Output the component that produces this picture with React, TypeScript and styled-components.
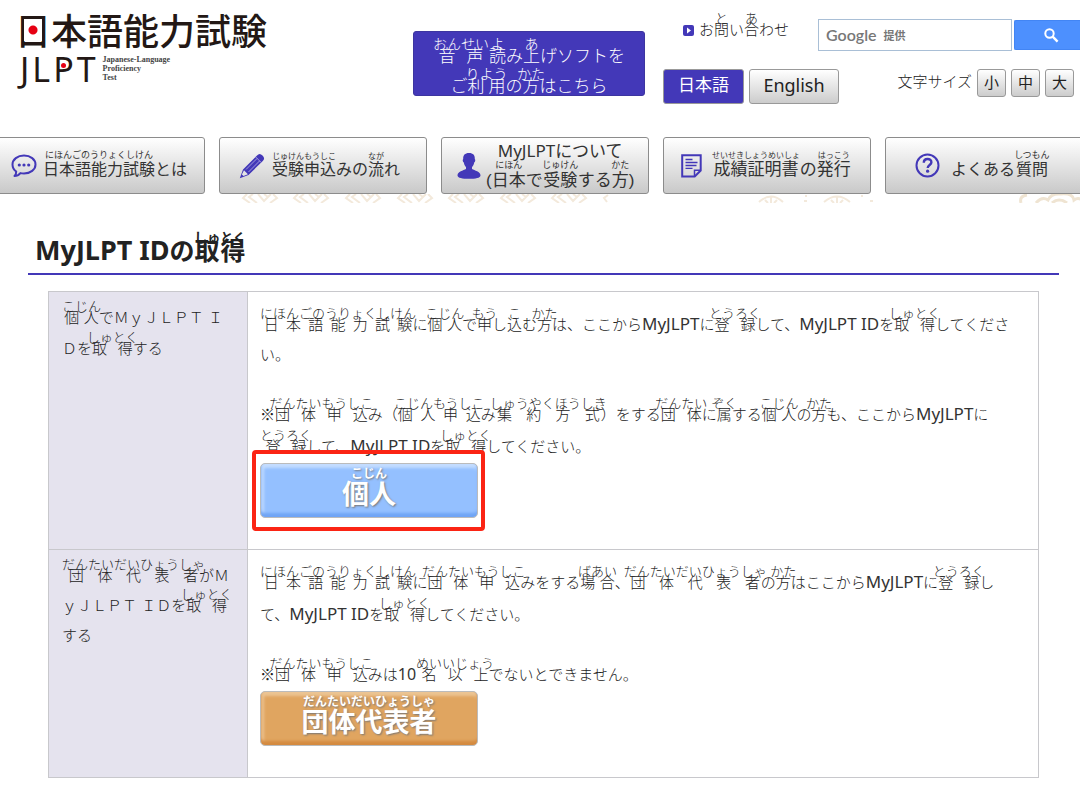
import React from 'react';
import styled, { createGlobalStyle } from 'styled-components';

const BRAND = '#4338b8';
const SANS = '"Noto Sans", "Noto Sans CJK JP", sans-serif';
const SANS_JP = '"Noto Sans CJK JP", "Noto Sans", sans-serif';
/* Short ascent and descent, so ruby lines keep an even pitch. */
const BODY = '"Liberation Sans", "Noto Sans CJK JP", sans-serif';

const GlobalStyle = createGlobalStyle`
  * { box-sizing: border-box; }
  body {
    margin: 0;
    background: #fff;
    color: #222;
    font-family: ${BODY};
    font-size: 15px;
    line-height: 30px;
    overflow-x: hidden;
  }
  button, input { font-family: inherit; }
`;

/* Readings lie partly over the top of their base text. */
const RubyText = styled.rt<{ $size: number; $shift: number }>`
  position: relative;
  top: ${(p) => p.$shift}px;
  font-size: ${(p) => p.$size}px;
  line-height: 1px;
`;

type RProps = { b: string; t: string; size?: number; shift?: number };
const R = ({ b, t, size = 13, shift = 4 }: RProps) => (
  <ruby>
    {b}
    <RubyText $size={size} $shift={shift}>{t}</RubyText>
  </ruby>
);

const Latin = styled.span<{ $size?: number }>`
  color: #333;
  font-family: ${SANS};
  font-size: ${(p) => p.$size ?? 17}px;
  font-weight: 400;
  line-height: 1;
`;

/* ---------- header ---------- */

const Header = styled.header`
  display: grid;
  grid-template-columns: 1fr 232px 417px;
  column-gap: 18px;
  height: 137px;
`;

const Logo = styled.a`
  display: block;
  padding: 9px 0 0 15px;
  color: #231815;
  text-decoration: none;
`;

const LogoTitle = styled.span`
  display: block;
  font: 500 36px/40px ${SANS_JP};
  white-space: nowrap;
`;

const Sun = styled.span`
  position: relative;
  &::after {
    content: '';
    position: absolute;
    left: 9px;
    top: 16px;
    width: 18px;
    height: 22px;
    background: radial-gradient(circle, #e60012 4px, #fff 5px);
  }
`;

const LogoSub = styled.span`
  display: flex;
  gap: 7px;
  padding: 2px 0 0 5px;
`;

const LogoLetters = styled.span`
  display: flex;
  gap: 3px;
  font: 400 34px/36px ${SANS};
`;

const Dot = styled.span`
  position: relative;
  &::after {
    content: '';
    position: absolute;
    left: 8px;
    top: 12px;
    width: 5px;
    height: 5px;
    border-radius: 50%;
    background: #e60012;
  }
`;

const LogoCaption = styled.span`
  padding-top: 4px;
  color: #444;
  font: 700 8px/9px "Liberation Serif", serif;
`;

const Banner = styled.a`
  display: block;
  height: 65px;
  margin-top: 31px;
  border: 1px solid #3d35a0;
  border-radius: 3px;
  background: ${BRAND};
  color: #fff;
  font-size: 17px;
  font-weight: 300;
  text-align: center;
  text-decoration: none;
`;

const BannerLine = styled.span`
  display: block;
  height: 37px;
  margin-bottom: -7px;
  padding-top: 7px;
`;

const Tools = styled.div`
  display: flex;
  flex-direction: column;
`;

const ToolRow = styled.div`
  display: flex;
  justify-content: space-between;
  align-items: flex-start;
`;

const TopRow = styled(ToolRow)`
  height: 68px;
  padding: 8px 0 0 20px;
`;

const ContactLink = styled.a`
  display: flex;
  align-items: center;
  gap: 5px;
  padding-top: 7px;
  color: #222;
  font-weight: 300;
  text-decoration: none;
`;

const ContactText = styled.span`
  margin-top: -8px;
  padding-top: 8px;
`;

const Search = styled.form`
  display: flex;
  gap: 2px;
  padding-top: 11px;
`;

const SearchBox = styled.div`
  position: relative;
`;

const SearchInput = styled.input`
  display: block;
  width: 194px;
  height: 32px;
  padding: 0 8px;
  border: 1px solid #a9bfd6;
  background: #fff;
`;

const SearchMark = styled.label`
  position: absolute;
  left: 8px;
  top: 0;
  display: flex;
  align-items: center;
  gap: 7px;
  height: 32px;
  color: #777;
  font: 700 11px/30px ${SANS_JP};
  pointer-events: none;
`;

const GoogleWord = styled.span`
  font: 600 16px/30px Lato, sans-serif;
`;

const SearchButton = styled.button`
  display: flex;
  align-items: center;
  justify-content: center;
  width: 66px;
  height: 30px;
  margin-top: 1px;
  padding: 0 0 0 8px;
  border: 1px solid #4285f4;
  border-right: 0;
  border-radius: 2px 0 0 2px;
  background: #4d90fe;
`;

const BottomRow = styled(ToolRow)`
  padding-right: 6px;
`;

const Group = styled.div`
  display: flex;
  gap: 5px;
`;

const GreyButton = styled.button<{ $w: number; $h: number; $size: number; $active?: boolean }>`
  width: ${(p) => p.$w}px;
  height: ${(p) => p.$h}px;
  margin-top: 1px;
  padding: 0 0 3px;
  border: 1px solid #999;
  border-radius: 3px;
  background: ${(p) => (p.$active ? BRAND : 'linear-gradient(#fff, #ccc)')};
  color: ${(p) => (p.$active ? '#fff' : '#222')};
  font-family: ${SANS};
  font-size: ${(p) => p.$size}px;
  line-height: 24px;
`;

const SizeLabel = styled.span`
  font-weight: 300;
  line-height: 28px;
`;

/* ---------- navigation ---------- */

const Nav = styled.nav`
  display: flex;
  gap: 14px;
  margin-left: -3px;
  overflow: hidden;
`;

const NavItem = styled.a`
  display: flex;
  flex: 0 0 208px;
  align-items: center;
  height: 57px;
  border: 1px solid #8c8c8c;
  border-radius: 3px;
  background: linear-gradient(#fff, #c9c9c9);
  color: #333;
  line-height: 23px;
  text-decoration: none;
  white-space: nowrap;
`;

const NavIcon = styled.span<{ $left: number; $gap: number }>`
  display: flex;
  margin: 0 ${(p) => p.$gap}px 0 ${(p) => p.$left}px;
`;

const NavText = styled.span<{ $top?: number; $size?: number }>`
  padding-top: ${(p) => p.$top ?? 0}px;
  font-size: ${(p) => p.$size ?? 16}px;
  text-align: center;
  ruby-align: center;
`;

const NR = ({ b, t, size = 9 }: { b: string; t: string; size?: number }) => <R b={b} t={t} size={size} shift={-1} />;

const Pattern = styled.svg`
  display: block;
  width: 100%;
  height: 9px;
`;

/* ---------- content ---------- */

const Main = styled.main`
  padding: 18px 21px 13px 28px;
`;

const Title = styled.h1`
  margin: 0;
  padding: 6px 7px 0;
  height: 54px;
  border-bottom: 2px solid ${BRAND};
  font-size: 25px;
  font-weight: 700;
  line-height: 48px;
`;

const TitleLatin = styled.span`
  font-family: ${SANS};
  font-size: 27px;
  line-height: 1;
`;

const TableWrap = styled.div`
  padding: 16px 20px 0;
`;

const Table = styled.table`
  width: 100%;
  border-collapse: collapse;
  table-layout: fixed;
  font-weight: 300;
`;

const HeadCol = styled.col`
  width: 199px;
`;

const HeadCell = styled.th`
  padding: 11px 11px 0 13px;
  border: 1px solid #c8c8cc;
  background: #e5e3ee;
  font-weight: 300;
  text-align: left;
  vertical-align: top;
`;

const Cell = styled.td`
  padding: 8px 24px 31px 12px;
  border: 1px solid #c8c8cc;
  vertical-align: top;
`;

const Para = styled.p`
  margin: 0;
  padding: 10px 0 20px;
  &:last-of-type { padding-bottom: 1px; }
`;

const ButtonHolder = styled.div`
  position: relative;
  width: 218px;
`;

const EntryButton = styled.button<{ $bg: string; $edge: string; $glow: string }>`
  display: block;
  width: 218px;
  height: 55px;
  padding: 8px 0 0;
  border: 1px solid #bbb;
  border-radius: 5px;
  background: ${(p) => p.$bg};
  box-shadow: inset 0 -4px 3px ${(p) => p.$edge}, inset 0 4px 3px ${(p) => p.$glow}, inset 3px 0 3px ${(p) => p.$glow};
  color: #fff;
  font: 700 27px/46px ${BODY};
  text-shadow: 1px 1px 2px #777;
  ruby-align: center;
`;

const Highlight = styled.span`
  position: absolute;
  left: -8px;
  top: -13px;
  width: 233px;
  height: 81px;
  border: 4px solid #fb2414;
  border-radius: 4px;
  pointer-events: none;
`;

const tile = (x: number) => (
  <g key={x} transform={`translate(${x} 0)`}>
    <path d="M5 0 L1 4 L8 9 M11 0 L7 3 L15 9 M16 0 L22 7 L29 0 M22 0 L26 3" />
    <path d="M31 0 L35 4 L28 9" />
  </g>
);

export default function App() {
  return (
    <>
      <GlobalStyle />
      <Header>
        <Logo href="#">
          <LogoTitle><Sun>日</Sun>本語能力試験</LogoTitle>
          <LogoSub>
            <LogoLetters><span>J</span><span>L</span><Dot>P</Dot><span>T</span></LogoLetters>
            <LogoCaption>Japanese-Language<br />Proficiency<br />Test</LogoCaption>
          </LogoSub>
        </Logo>
        <Banner href="#">
          <BannerLine><R b="音声" t="おんせい" size={14} /><R b="読" t="よ" size={14} />み<R b="上" t="あ" size={14} />げソフトを</BannerLine>
          <BannerLine>ご<R b="利用" t="りよう" size={14} />の<R b="方" t="かた" size={14} />はこちら</BannerLine>
        </Banner>
        <Tools>
          <TopRow>
            <ContactLink href="#">
              <svg width="11" height="11" viewBox="0 0 11 11"><rect width="11" height="11" rx="2" fill={BRAND} /><path d="M4 2.5v6l4-3z" fill="#fff" /></svg>
              <ContactText>お<R b="問" t="と" />い<R b="合" t="あ" />わせ</ContactText>
            </ContactLink>
            <Search>
              <SearchBox>
                <SearchInput id="q" type="text" />
                <SearchMark htmlFor="q"><GoogleWord>Google</GoogleWord>提供</SearchMark>
              </SearchBox>
              <SearchButton type="button" aria-label="検索">
                <svg width="15" height="15" viewBox="0 0 15 15" fill="none" stroke="#fff"><circle cx="5.5" cy="5.5" r="4.2" strokeWidth="2" /><path d="M8.7 8.7 L13.6 13.6" strokeWidth="2.4" /></svg>
              </SearchButton>
            </Search>
          </TopRow>
          <BottomRow>
            <Group>
              <GreyButton type="button" $w={81} $h={35} $size={17} $active>日本語</GreyButton>
              <GreyButton type="button" $w={90} $h={35} $size={18}>English</GreyButton>
            </Group>
            <Group>
              <SizeLabel>文字サイズ</SizeLabel>
              <GreyButton type="button" $w={29} $h={28} $size={15}>小</GreyButton>
              <GreyButton type="button" $w={29} $h={28} $size={15}>中</GreyButton>
              <GreyButton type="button" $w={29} $h={28} $size={15}>大</GreyButton>
            </Group>
          </BottomRow>
        </Tools>
      </Header>

      <Nav>
        <NavItem href="#">
          <NavIcon $left={13} $gap={6}>
            <svg width="26" height="24" viewBox="0 0 26 24">
              <path d="M13 1.5c6.5 0 11.5 4 11.5 9s-5 9-11.500 9c-1.300 0-2.500-.1-3.600-.4C8 20.800 6 22 3.500 22c1.300-1.300 1.800-2.700 1.700-4.500C2.800 15.800 1.500 13.300 1.500 10.500c0-5 5-9 11.500-9z" fill="none" stroke={BRAND} strokeWidth="2" strokeLinejoin="round" />
              <g fill={BRAND}><circle cx="8.300" cy="11" r="1.600" /><circle cx="13" cy="11" r="1.600" /><circle cx="17.700" cy="11" r="1.600" /></g>
            </svg>
          </NavIcon>
          <NavText $top={8}><NR b="日本語能力試験" t="にほんごのうりょくしけん" />とは</NavText>
        </NavItem>
        <NavItem href="#">
          <NavIcon $left={19} $gap={7}>
            <svg width="26" height="26" viewBox="0 0 26 26">
              <path d="M18 2.500Q20.500-.5 23.500 2.500T23.800 8L9.500 22 .8 25.300 4 16.500z" fill={BRAND} />
              <path d="M5 17.300 8.900 21.200 4.500 23 2.900 21.500z" fill="#e4e4e4" />
              <path d="M7 16.500 18 5.500M9.500 19 20.500 8M16.500 3.800 22.300 9.600" stroke="#b9b4e4" strokeWidth=".8" />
            </svg>
          </NavIcon>
          <NavText $top={8}><NR b="受験申込" t="じゅけんもうしこ" size={8} />みの<NR b="流" t="なが" size={8} />れ</NavText>
        </NavItem>
        <NavItem href="#">
          <NavIcon $left={15} $gap={5}>
            <svg width="24" height="26" viewBox="0 0 24 26" fill={BRAND}>
              <path d="M12 0c4.200 0 6 2.300 5.800 6 .8.600.6 2.700-.6 3.400-.4 2.500-1.600 4-2.200 4.600v2c2.500 1.500 8.500 2.400 8.500 6.500 0 2.500-5 3.300-11.500 3.300S.5 25 .5 22.500C.5 18.400 6.500 17.500 9 16v-2c-.6-.6-1.800-2.100-2.200-4.600C5.600 8.700 5.400 6.600 6.200 6 6 2.300 7.800 0 12 0z" />
            </svg>
          </NavIcon>
          <NavText $size={17}><Latin>MyJLPT</Latin>について<br />(<NR b="日本" t="にほん" />で<NR b="受験" t="じゅけん" />する<NR b="方" t="かた" />)</NavText>
        </NavItem>
        <NavItem href="#">
          <NavIcon $left={17} $gap={10}>
            <svg width="21" height="24" viewBox="0 0 21 24" fill="none" stroke={BRAND}>
              <path d="M1.200 1.200h18.500v15.300l-6 6H1.200z" strokeWidth="2" />
              <path d="M19.500 16.300h-6v6" strokeWidth="1.500" />
              <path d="M4.500 5.500h7M4.500 8.500h12M4.500 11.500h11M4.500 14.300h7" strokeWidth="1.300" />
            </svg>
          </NavIcon>
          <NavText $top={8} $size={17}><NR b="成績証明書" t="せいせきしょうめいしょ" size={8} />の<NR b="発行" t="はっこう" size={8} /></NavText>
        </NavItem>
        <NavItem href="#">
          <NavIcon $left={29} $gap={11}>
            <svg width="25" height="25" viewBox="0 0 25 25" fill="none" stroke={BRAND}>
              <circle cx="12.500" cy="12.500" r="11" strokeWidth="2" />
              <path d="M8.800 9.800c0-5 7.600-4.800 7.600-.6 0 2.800-3.700 2.700-3.700 5.800" strokeWidth="2.400" />
              <circle cx="12.600" cy="18.200" r="1.600" fill={BRAND} stroke="none" />
            </svg>
          </NavIcon>
          <NavText $top={4}>よくある<NR b="質問" t="しつもん" /></NavText>
        </NavItem>
      </Nav>
      <Pattern fill="none" stroke="#f3e9db" strokeWidth="2" aria-hidden="true">
        {[242, 293, 345, 397, 448, 500, 551].map(tile)}
        <path d="M608 1l-4 3 3 4" />
        <path d="M759 8q12-11 24 0M771 3v6M765 6l3 3M777 6l-3 3M824 8q13-11 26 0M837 3v6M831 6l3 3M843 6l-3 3M804 7h3M805 2h2M861 2h2M870 7h3" />
        <path d="M1021 9q-2-7 6-8M1036 9q6-7 12-3 3-7 13-6 12-1 13 6 4-3 8 0M1052 9q7-6 15 0" strokeWidth="3" stroke="#efe4d2" />
      </Pattern>

      <Main>
        <Title><TitleLatin>MyJLPT ID</TitleLatin>の<R b="取得" t="しゅとく" shift={6} /></Title>
        <TableWrap>
          <Table>
            <colgroup><HeadCol /><col /></colgroup>
            <tbody>
              <tr>
                <HeadCell scope="row"><R b="個人" t="こじん" />でＭｙＪＬＰＴ ＩＤを<R b="取得" t="しゅとく" />する</HeadCell>
                <Cell>
                  <Para>
                    <R b="日本語能力試験" t="にほんごのうりょくしけん" />に<R b="個人" t="こじん" />で<R b="申" t="もう" />し<R b="込" t="こ" />む<R b="方" t="かた" />は、ここから<Latin>MyJLPT</Latin>に<R b="登録" t="とうろく" />して、<Latin>MyJLPT ID</Latin>を<R b="取得" t="しゅとく" />してください。
                  </Para>
                  <Para>
                    ※<R b="団体申込" t="だんたいもうしこ" />み（<R b="個人申込" t="こじんもうしこ" />み<R b="集約方式" t="しゅうやくほうしき" />）をする<R b="団体" t="だんたい" />に<R b="属" t="ぞく" />する<R b="個人" t="こじん" />の<R b="方" t="かた" />も、ここから<Latin>MyJLPT</Latin>に<R b="登録" t="とうろく" />して、<Latin>MyJLPT ID</Latin>を<R b="取得" t="しゅとく" />してください。
                  </Para>
                  <ButtonHolder>
                    <EntryButton type="button" $bg="#94c0ff" $edge="#6fa4f5" $glow="#c3dcff"><R b="個人" t="こじん" size={12} shift={0} /></EntryButton>
                    <Highlight />
                  </ButtonHolder>
                </Cell>
              </tr>
              <tr>
                <HeadCell scope="row"><R b="団体代表者" t="だんたいだいひょうしゃ" />がＭｙＪＬＰＴ ＩＤを<R b="取得" t="しゅとく" />する</HeadCell>
                <Cell>
                  <Para>
                    <R b="日本語能力試験" t="にほんごのうりょくしけん" />に<R b="団体申込" t="だんたいもうしこ" />みをする<R b="場合" t="ばあい" />、<R b="団体代表者" t="だんたいだいひょうしゃ" />の<R b="方" t="かた" />はここから<Latin>MyJLPT</Latin>に<R b="登録" t="とうろく" />して、<Latin>MyJLPT ID</Latin>を<R b="取得" t="しゅとく" />してください。
                  </Para>
                  <Para>
                    ※<R b="団体申込" t="だんたいもうしこ" />みは<Latin $size={16}>10</Latin><R b="名以上" t="めいいじょう" />でないとできません。
                  </Para>
                  <ButtonHolder>
                    <EntryButton type="button" $bg="#e0a560" $edge="#d48a40" $glow="#ecc493"><R b="団体代表者" t="だんたいだいひょうしゃ" size={12} shift={0} /></EntryButton>
                  </ButtonHolder>
                </Cell>
              </tr>
            </tbody>
          </Table>
        </TableWrap>
      </Main>
    </>
  );
}
